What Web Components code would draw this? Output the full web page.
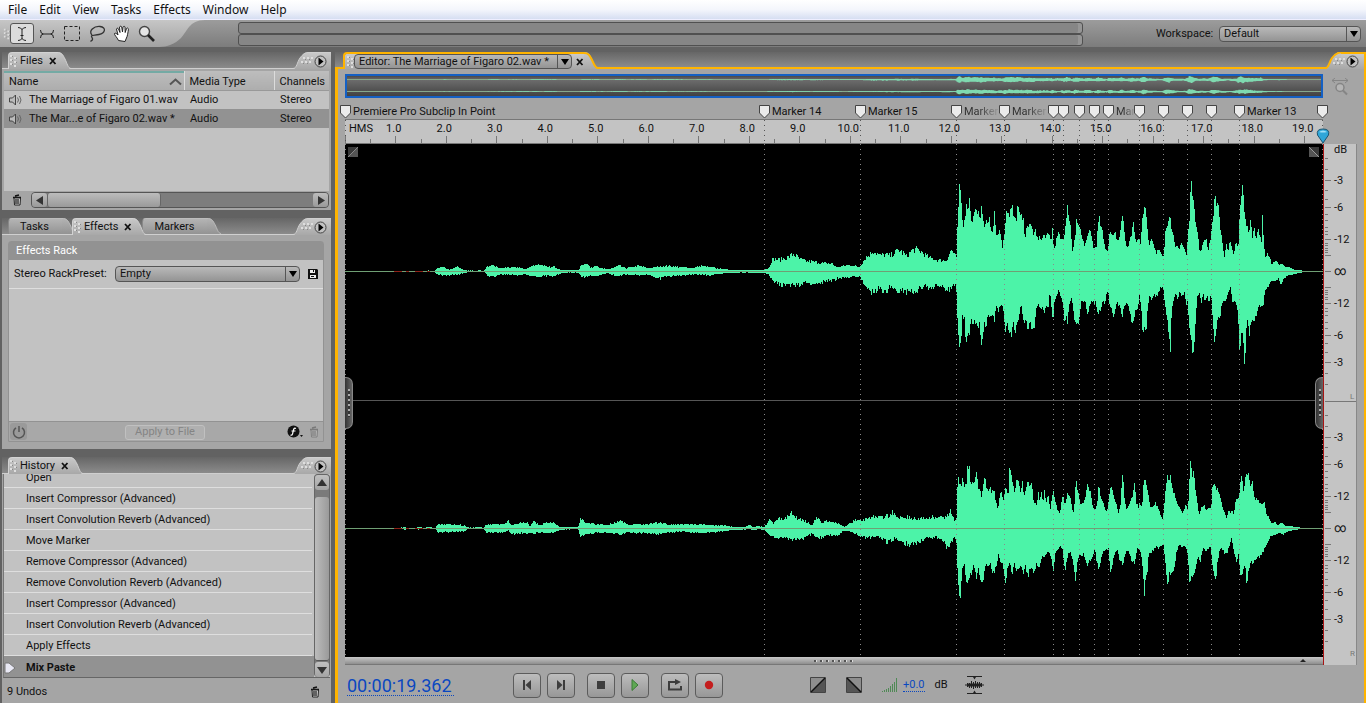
<!DOCTYPE html>
<html lang="en">
<head>
<meta charset="utf-8">
<title>Audio Editor</title>
<style>
html, body { height: 100%; }
body {
  margin: 0;
  font: 11px/14px Roboto, "Noto Sans", sans-serif;
  color: #111;
  background: #626262;
}
</style>
</head>
<body>
<audio-app></audio-app>

<script>
const define = (name, html, setup) => {
  const tpl = document.createElement('template');
  tpl.innerHTML = html;
  customElements.define(name, class extends HTMLElement {
    constructor() {
      super();
      this.attachShadow({ mode: 'open' }).append(tpl.content.cloneNode(true));
    }
    connectedCallback() {
      if (this.ready) return;
      this.ready = true;
      if (setup) setup(this, this.shadowRoot);
    }
  });
};

/* ---------- icons: [width, height, markup] ---------- */
const TRASH = `<path d="M1 3.500h8M3 2l4-1" stroke="#111" stroke-width="1.500"/><path d="M2 4h6.500l-.5 7H2.500z" fill="#ddd" stroke="#222"/><path d="M4 5v5M6 5v5" stroke="#111" stroke-width="1.200"/>`;
const ICONS = {
  ibeam: [16, 18, `<path d="M4 2.500q3 0 4 2 1-2 4-2M8 4v10M4 15.500q3 0 4-2 1 2 4 2M6.500 10.500h3" fill="none" stroke="#222"/>`],
  scrub: [16, 12, `<path d="M1.500 2q0 4 3 4h7q3 0 3-4M1.500 10q0-4 3-4M14.500 10q0-4-3-4" fill="none" stroke="#222"/>`],
  marquee: [16, 16, `<path d="M.5 .5h15v14H.5z" fill="none" stroke="#222" stroke-dasharray="3 2"/>`],
  lasso: [18, 18, `<path d="M4 10C0 6 6 1 12 1.500c7 .8 5 7-1 8-4 .8-7 .5-7.500 1.500-.3 1.500 1.500 2 1 3.500-.3 1-1.500 1.500-2 2" fill="none" stroke="#333" stroke-width="1.300"/>`],
  hand: [18, 18, `<path d="M5.500 15.500C4 12 1 10 1.500 8.500c1-1 2.500.5 3.500 1.500L3.500 4c.5-1.200 1.500-1 2 0L7 7.500 6.500 2c.8-1.200 1.800-1 2.200 0L9.500 7l.5-5c.6-1 1.800-.8 2 0l.2 5.500 1.300-4c.8-1 1.900-.3 1.900.7-.3 3-.8 5-1.200 7l-2.200 5.300z" fill="#fff" stroke="#222"/>`],
  zoom: [18, 18, `<circle cx="6.500" cy="6.500" r="5" fill="#e6e6e6" stroke="#444" stroke-width="1.400"/><path d="M10 10l6 6" stroke="#222" stroke-width="2.600"/>`],
  grip: [8, 12, `<g fill="#dedede"><path d="M1 0h2v2H1zM5 2h2v2H5zM1 4h2v2H1zM5 6h2v2H5zM1 8h2v2H1zM5 10h2v2H5z"/></g><g fill="#888"><path d="M3 1h1v1H3zM7 3h1v1H7zM3 5h1v1H3zM7 7h1v1H7zM3 9h1v1H3z"/></g>`],
  gripwide: [12, 8, `<g fill="#dedede"><path d="M2 0h2v2H2zM6 0h2v2H6zM10 0h2v2h-2zM0 4h2v2H0zM4 4h2v2H4zM8 4h2v2H8z"/></g><g fill="#888"><path d="M4 2h1v1H4zM8 2h1v1H8zM2 6h1v1H2zM6 6h1v1H6z"/></g>`],
  close: [8, 8, `<path d="M1 1l5.500 6M6.500 1L1 7" stroke="#111" stroke-width="1.800"/>`],
  play: [13, 13, `<circle cx="6.500" cy="6.500" r="5.500" fill="#c2c2c2" stroke="#444"/><path d="M4.500 2.500l5 4-5 4z" fill="#000"/>`],
  sort: [13, 8, `<path d="M1 6.500L6.500 1.500 12 6.500" fill="none" stroke="#555" stroke-width="2"/>`],
  speaker: [13, 12, `<path d="M.5 4h3L6.500 1v10L3.500 8H.5z" fill="#bbb" stroke="#444"/><path d="M8.500 3.500q2 2.500 0 5M10.500 2q3 4 0 8" fill="none" stroke="#666"/>`],
  trash: [11, 12, TRASH],
  trashdim: [11, 12, `<g opacity=".3">${TRASH}</g>`],
  left: [8, 9, `<path d="M7 0v9L0 4.500z" fill="#333"/>`],
  right: [8, 9, `<path d="M1 0v9l7-4.500z" fill="#333"/>`],
  up: [10, 8, `<path d="M0 7h10L5 0z" fill="#333"/>`],
  down: [10, 8, `<path d="M0 1h10L5 8z" fill="#333"/>`],
  save: [10, 10, `<path d="M0 0h9l1 1v9H0z" fill="#111"/><path d="M2 1h5v3H2zM2 6h6v3H2z" fill="#eee"/><path d="M5 1h1v2H5zM3 7h3v1H3z" fill="#111"/>`],
  power: [16, 16, `<path d="M5 3.800a5.500 5.500 0 1 0 6 0M8 2v6" fill="none" stroke="#555" stroke-width="1.500"/>`],
  fx: [17, 14, `<circle cx="6.500" cy="6.500" r="6" fill="#111"/><path d="M9 3.500q-2-1-2.500 1.500l-1 4q-.5 1.500-2 1M4.500 6h4" fill="none" stroke="#fff" stroke-width="1.200"/><path d="M13 10h3l-1.500 2z" fill="#111"/>`],
  pointer: [12, 12, `<path d="M1 1h4l6 5-6 5H1z" fill="#e8e8f4" stroke="#777"/>`],
  marker: [13, 15, `<path d="M1.500 1.500h10v7.500L6.500 14 1.500 9z" fill="#ebebeb" stroke="#444"/>`],
  pin: [14, 16, `<path d="M7 15L1.500 7Q0 1 7 1t5.500 6z" fill="#2fa6d8" stroke="#1c5570"/><path d="M3 4q4-3 8 0-4 1-8 0" fill="#9fe0f8"/>`],
  zoomsel: [18, 18, `<path d="M1 2.500h16M4 0L1 2.500 4 5M14 0l3 2.500L14 5" fill="none" stroke="#858585"/><circle cx="9" cy="9.500" r="4" fill="#b5b5b5" stroke="#858585" stroke-width="1.500"/><path d="M12 12.500l4 4" stroke="#858585" stroke-width="2"/>`],
  start: [10, 12, `<path d="M1 1h2v10H1zM9 1v10L3.500 6z" fill="#3d3d3d"/>`],
  end: [10, 12, `<path d="M7 1h2v10H7zM1 1v10l5.500-5z" fill="#3d3d3d"/>`],
  stop: [10, 10, `<path d="M1 1h8v8H1z" fill="#3d3d3d"/>`],
  playgreen: [8, 12, `<path d="M1 .5v11L7 6z" fill="#5fa854" stroke="#3c7a38"/>`],
  loop: [16, 12, `<path d="M8 3H2v7.500h12V7" fill="none" stroke="#3d3d3d" stroke-width="2"/><path d="M8 0l6 3-6 3z" fill="#3d3d3d"/>`],
  record: [10, 10, `<circle cx="5" cy="5" r="4.200" fill="#c41e1e"/>`],
  fadein: [17, 17, `<path d="M.5 .5h15v15H.5z" fill="#8e8e8e" stroke="#444"/><path d="M15 1v14H1z" fill="#555"/><path d="M1 15L15 1" stroke="#111" stroke-width="1.500"/>`],
  fadeout: [17, 17, `<path d="M.5 .5h15v15H.5z" fill="#8e8e8e" stroke="#444"/><path d="M1 1v14h14z" fill="#555"/><path d="M1 1l14 14" stroke="#111" stroke-width="1.500"/>`],
  bars: [16, 14, `<path d="M.5 14v-1M2.500 14v-2M4.500 14v-3M6.500 14v-4M8.500 14v-6M10.500 14v-8M12.500 14v-10M14.500 14V0" stroke="#4f8a55"/>`],
  scale: [20, 18, `<path d="M2 .5h15M2 17.500h15" stroke="#222"/><path d="M8 1h3L9.500 3.500zM8 17h3l-1.500-2.500z" fill="#222"/><path d="M0 9h19M2.500 7v4M4.500 7v5M6.500 5v7M8.500 6v7M10.500 5v7M12.500 6v6M14.500 6v6M16.500 7v4" stroke="#222"/><path d="M3 7.500h14v3H3z" fill="#222"/>`],
  cornerin: [10, 10, `<path d="M0 0h10v10H0z" fill="#555"/><path d="M0 0h10L0 10z" fill="#3a3a3a"/><path d="M0 10L10 0" stroke="#888"/>`],
  cornerout: [10, 10, `<path d="M0 0h10v10H0z" fill="#555"/><path d="M0 0h10v10z" fill="#3a3a3a"/><path d="M0 0l10 10" stroke="#999"/>`],
};
define('ui-icon', `<style>:host{display:inline-flex;flex:none}svg{display:block}</style>`, (el, root) => {
  const [w, h, art] = ICONS[el.getAttribute('name')];
  root.innerHTML += `<svg width="${w}" height="${h}" viewBox="0 0 ${w} ${h}" fill="none" aria-hidden="true">${art}</svg>`;
});

/* ---------- shared controls ---------- */
define('icon-button', `
<style>
:host { display: inline-flex; flex: none; }
button { all: unset; box-sizing: border-box; display: flex; align-items: center; justify-content: center; width: 100%; height: 100%; border-radius: inherit; }
</style>
<button type="button"><slot></slot></button>`, (el, root) => {
  root.querySelector('button').setAttribute('aria-label', el.getAttribute('label'));
});

define('skin-select', `
<style>
:host { display: flex; align-items: center; gap: 5px; white-space: nowrap; }
label { flex: none; min-width: var(--label-width, 0); }
label:empty { display: none; }
.box { display: grid; flex: 1; min-width: 0; height: var(--select-height, 16px); box-sizing: border-box; border: 1px solid #555; border-radius: 4px;
  background: linear-gradient(#b9b9b9, #949494); }
select { all: unset; grid-area: 1/1; padding: 0 16px 0 4px; font: inherit; color: inherit; line-height: 14px; min-width: 0; overflow: hidden; }
.arrow { grid-area: 1/1; justify-self: end; width: 13px; border-left: 1px solid #555; display: flex; align-items: center; justify-content: center; pointer-events: none; }
</style>
<label for="s"></label>
<div class="box"><select id="s"></select>
<span class="arrow"><svg width="8" height="6"><path d="M0 0h8L4 6z" fill="#000"/></svg></span></div>`, (el, root) => {
  const label = el.getAttribute('label');
  if (label) root.querySelector('label').textContent = label;
  else root.querySelector('select').setAttribute('aria-label', el.getAttribute('name'));
  root.querySelector('select').add(new Option(el.getAttribute('value')));
});

define('panel-tab', `
<style>
:host { display: flex; height: 16px; flex: none; margin-right: -4px; z-index: 1; --top: #b4b4b4; --bottom: #939393; --edge: #bcbcbc; }
:host([active]) { height: 17px; --top: #c9c9c9; --bottom: #a8a8a8; --edge: #d2d2d2; z-index: 2; }
:host([hot]) { --edge: #ffb400; }
.main { display: flex; align-items: center; gap: 3px; border: 1px solid var(--edge); border-right: 0; border-bottom: 0; border-radius: 4px 0 0 0; background: linear-gradient(var(--top), var(--bottom)); }
:host(:not([active])) .main { padding: 0 13px 0 11px; border-color: var(--edge) transparent transparent #888; }
:host([hot]) .main { border-width: 2px 0 0 2px; padding-left: 1px; }
.x { margin-left: 3px; width: 8px; height: 8px; }
:host(:not([active])) .only { display: none; }
.tail { display: block; width: 14px; height: 100%; flex: none; }
</style>
<div class="main"><ui-icon class="only" name="grip"></ui-icon><slot></slot><icon-button class="x only" label="Close"><ui-icon name="close"></ui-icon></icon-button></div>
<svg class="tail" viewBox="0 0 14 17" preserveAspectRatio="none">
<defs><linearGradient id="g" x2="0" y2="1"><stop stop-color="var(--top)"/><stop offset="1" stop-color="var(--bottom)"/></linearGradient></defs>
<path d="M0 0C5 0 6 3 8 7S11 17 14 17H0z" fill="url(#g)"/>
<path class="line" d="M0 .5C5 .5 6 3 8 7S11 16.500 14 16.500" fill="none" stroke="var(--edge)"/>
</svg>`, (el, root) => {
  if (el.hasAttribute('hot')) {
    const line = root.querySelector('.line');
    line.setAttribute('d', 'M0 1C5 1 6 4 8 8S11 16 14 16');
    line.setAttribute('stroke-width', '2');
  }
});

define('dock-panel', `
<style>
:host { display: flex; flex-direction: column; min-height: 0; min-width: 0; --line: #cfcfcf; --line-size: 1px; }
:host([hot]) { --line: #ffb400; --line-size: 2px; }
header { display: flex; justify-content: space-between; height: 17px; flex: none; margin-bottom: calc(0px - var(--line-size)); padding-left: 6px; position: relative; z-index: 1;
  background: linear-gradient(#666, #8b8b8b) 0 0 / 100% calc(100% - var(--line-size)) no-repeat; }
.tabs { display: flex; }
.corner { display: flex; flex: none; }
.curve { width: 16px; height: 17px; display: block; flex: none; }
.menu { display: flex; align-items: center; gap: 1px; padding-right: 4px; background: linear-gradient(#c9c9c9, #a8a8a8); border-top: var(--line-size) solid var(--line); box-sizing: border-box; }
.menu > ui-icon { margin-left: -8px; }
.body { display: flex; flex-direction: column; flex: 1; min-height: 0; background: #a5a5a5; border-top: var(--line-size) solid var(--line); box-sizing: border-box; }
:host([hot]) header { padding-left: 8px; }
:host([hot]) .body { border: solid #ffb400; border-width: 2px 2px 0 3px; }
:host([hot]) .menu { border-right: 2px solid #ffb400; padding-right: 5px; }
</style>
<header><div class="tabs"><slot name="tab"></slot></div>
<div class="corner"><svg class="curve" viewBox="0 0 16 17"><defs><linearGradient id="g" x2="0" y2="1"><stop stop-color="#c9c9c9"/><stop offset="1" stop-color="#a8a8a8"/></linearGradient></defs><path d="M0 17C4 17 4 10 7 6S12 0 16 0V17z" fill="url(#g)"/><path d="M0 16.500C4 16.500 4 10 7 6S12 .5 16 .5" fill="none" stroke="var(--line)" stroke-width="var(--line-size)"/></svg>
<div class="menu"><ui-icon name="gripwide"></ui-icon><icon-button label="Panel menu"><ui-icon name="play"></ui-icon></icon-button></div></div></header>
<div class="body"><slot></slot></div>`);

/* ---------- top bars ---------- */
define('menu-bar', `
<style>
:host { display: block; background: linear-gradient(#fff, #f4f6fc 50%, #d6def2); border-bottom: 1px solid #eef; }
nav { display: flex; gap: 12px; padding: 2px 8px 1px; font: 12px/16px "Noto Sans", sans-serif; }
button { all: unset; }
</style>
<nav></nav>`, (el, root) => {
  root.querySelector('nav').innerHTML = ['File', 'Edit', 'View', 'Tasks', 'Effects', 'Window', 'Help']
    .map(t => `<button type="button">${t}</button>`).join('');
});

define('tool-bar', `
<style>
:host { display: flex; align-items: stretch; height: 27px; background: linear-gradient(#9c9c9c, #7c7c7c); }
.tools { display: flex; align-items: center; padding-left: 3px; background: linear-gradient(#c6c6c6, #a2a2a2); }
.tools icon-button { width: 25px; height: 21px; }
.tools .grip { width: 7px; overflow: hidden; }
.tools .on { box-sizing: border-box; width: 24px; border: 1px solid #555; border-radius: 3px; background: #dcdcdc; }
.sweep { width: 46px; height: 27px; flex: none; display: block; }
.meters { flex: 1; display: flex; flex-direction: column; justify-content: center; margin: 1px 73px 1px 33px; }
.meters i { display: block; box-sizing: border-box; height: 12px; border: 1px solid #505050; border-radius: 3px; background: #868686; box-shadow: inset -4px 0 #969696; }
skin-select { width: 205px; margin-right: 5px; --label-width: 58px; }
</style>
<div class="tools"><ui-icon class="grip" name="grip"></ui-icon>
<icon-button class="on" label="Time selection"><ui-icon name="ibeam"></ui-icon></icon-button>
<icon-button label="Scrub"><ui-icon name="scrub"></ui-icon></icon-button>
<icon-button label="Marquee"><ui-icon name="marquee"></ui-icon></icon-button>
<icon-button label="Lasso"><ui-icon name="lasso"></ui-icon></icon-button>
<icon-button label="Hand"><ui-icon name="hand"></ui-icon></icon-button>
<icon-button label="Zoom"><ui-icon name="zoom"></ui-icon></icon-button></div>
<svg class="sweep" viewBox="0 0 46 27"><defs><linearGradient id="g" x2="0" y2="1"><stop stop-color="#c6c6c6"/><stop offset="1" stop-color="#a2a2a2"/></linearGradient></defs><path d="M0 0H46C30 0 28 12 22 18S8 27 0 27z" fill="url(#g)"/></svg>
<div class="meters"><i></i><i></i></div>
<skin-select label="Workspace:" value="Default"></skin-select>`);

/* ---------- left panels ---------- */
define('file-list', `
<style>
:host { display: flex; flex-direction: column; margin: 2px 2px 0; }
.list { height: 120px; background: #c2c2c2; }
table { width: 100%; border-collapse: collapse; table-layout: fixed; }
th { height: 19px; box-sizing: border-box; padding: 3px 0 0 5px; font-weight: normal; text-align: left; background: linear-gradient(#bdbdbd, #adadad); border-left: 1px solid #dcdcdc; border-bottom: 1px solid #999; }
th:first-child { border-left: 0; box-shadow: inset 0 2px #74aaa4; }
.head { display: flex; align-items: center; justify-content: space-between; padding-right: 2px; }
td { padding: 0 0 0 6px; height: 19px; box-sizing: border-box; white-space: nowrap; overflow: hidden; }
td:first-child { padding-left: 5px; }
.name { display: flex; align-items: center; gap: 7px; }
tr.sel { background: #929292; }
.foot { display: flex; align-items: center; height: 18px; }
.foot > icon-button { width: 27px; }
.scroll { flex: 1; display: flex; background: #7d7d7d; height: 16px; border: 1px solid #555; border-radius: 4px; box-sizing: border-box; }
.scroll icon-button, .thumb { background: linear-gradient(#bcbcbc, #999); border-radius: 3px; box-sizing: border-box; }
.scroll icon-button { width: 15px; }
.thumb { width: 114px; border: 1px solid #666; border-width: 0 1px; }
.gap { flex: 1; }
</style>
<div class="list"><table>
<colgroup><col style="width:180px"><col style="width:90px"><col></colgroup>
<thead><tr><th><span class="head">Name <ui-icon name="sort"></ui-icon></span></th><th>Media Type</th><th>Channels</th></tr></thead>
<tbody><tr><td><span class="name"><ui-icon name="speaker"></ui-icon>The Marriage of Figaro 01.wav</span></td><td>Audio</td><td>Stereo</td></tr>
<tr class="sel"><td><span class="name"><ui-icon name="speaker"></ui-icon>The Mar...e of Figaro 02.wav *</span></td><td>Audio</td><td>Stereo</td></tr></tbody>
</table></div>
<div class="foot"><icon-button label="Delete file"><ui-icon name="trash"></ui-icon></icon-button>
<div class="scroll"><icon-button label="Scroll left"><ui-icon name="left"></ui-icon></icon-button><span class="thumb"></span><span class="gap"></span><icon-button label="Scroll right"><ui-icon name="right"></ui-icon></icon-button></div></div>`);

define('effects-rack', `
<style>
:host { display: flex; flex-direction: column; flex: 1; margin: 6px 7px 7px 6px; border: 1px solid #929292; border-radius: 3px 3px 0 0; background: #c2c2c2; }
h2 { margin: 0; padding: 0 7px; font: inherit; line-height: 18px; color: #fff; background: #929292; }
.preset { display: flex; align-items: center; gap: 3px; padding: 6px 0 6px 5px; border-bottom: 1px solid #dedede; }
skin-select { flex: 1; --label-width: 96px; }
.preset icon-button { width: 20px; }
.space { flex: 1; }
.foot { display: grid; grid-template-columns: 1fr auto 1fr; align-items: center; height: 19px; padding: 0 3px 0 1px; background: #a8a8a8; border-top: 1px solid #929292; }
.power { width: 17px; height: 17px; background: #9a9a9a; border-radius: 3px; }
.apply { font: inherit; line-height: 12px; padding: 0; width: 80px; height: 15px; color: #848484; background: #b0b0b0; border: 1px solid #c0c0c0; border-radius: 3px; margin-top: 1px; }
.end { display: flex; justify-content: flex-end; gap: 5px; }
</style>
<h2>Effects Rack</h2>
<div class="preset"><skin-select label="Stereo RackPreset:" value="Empty"></skin-select><icon-button label="Save preset"><ui-icon name="save"></ui-icon></icon-button></div>
<div class="space"></div>
<div class="foot"><icon-button class="power" label="Power"><ui-icon name="power"></ui-icon></icon-button>
<button class="apply" type="button" disabled>Apply to File</button>
<span class="end"><icon-button label="Add effect"><ui-icon name="fx"></ui-icon></icon-button><icon-button label="Remove"><ui-icon name="trashdim"></ui-icon></icon-button></span></div>`);

define('history-list', `
<style>
:host { display: flex; flex-direction: column; flex: 1; min-height: 0; }
.view { display: flex; flex: 1; min-height: 0; margin: 0 1px; background: #c2c2c2; border-bottom: 1px solid #666; border-left: 1px solid #777; }
ul { flex: 1; display: flex; flex-direction: column; justify-content: flex-end; margin: 0; padding: 0; list-style: none; overflow: hidden; }
li { flex: none; display: flex; align-items: center; height: 21px; padding-top: 2px; box-sizing: border-box; border-bottom: 1px solid #dedede; margin-right: 2px; }
li::before { content: ""; width: 22px; }
li.now { font-weight: bold; background: #929292; border: 0; margin: 0; }
li.now::before { display: none; }
li ui-icon { width: 22px; }
.scroll { width: 16px; flex: none; display: flex; flex-direction: column; background: #7a7a7a; border: 1px solid #666; border-bottom: 0; box-sizing: border-box; border-radius: 4px; }
.scroll icon-button { height: 15px; background: linear-gradient(#c0c0c0, #a4a4a4); border-radius: 3px; }
.thumb { flex: 1; margin: 7px 0 1px; background: linear-gradient(90deg, #bcbcbc, #9a9a9a); border-radius: 3px; border-bottom: 1px solid #555; }
.foot { display: flex; align-items: center; justify-content: space-between; height: 25px; padding: 3px 10px 0 5px; box-sizing: border-box; }
</style>
<div class="view"><ul></ul>
<div class="scroll"><icon-button label="Scroll up"><ui-icon name="up"></ui-icon></icon-button><span class="thumb"></span><icon-button label="Scroll down"><ui-icon name="down"></ui-icon></icon-button></div></div>
<div class="foot"><span>9 Undos</span><icon-button label="Clear history"><ui-icon name="trash"></ui-icon></icon-button></div>`, (el, root) => {
  root.querySelector('ul').innerHTML = ['Open', 'Insert Compressor (Advanced)', 'Insert Convolution Reverb (Advanced)', 'Move Marker',
    'Remove Compressor (Advanced)', 'Remove Convolution Reverb (Advanced)', 'Insert Compressor (Advanced)',
    'Insert Convolution Reverb (Advanced)', 'Apply Effects'].map(t => `<li>${t}</li>`).join('') +
    '<li class="now"><ui-icon name="pointer"></ui-icon>Mix Paste</li>';
});

/* ---------- waveform data ----------
   Envelopes are "position:level" lists on a grid of 2934 x 1539 units.
   The quiet passage lists position:above,below; the loud passage has one list per side. */
const QUIET = [
 '0:0,0 140:1,1 180:0,0 200:1,2 210:2,1 225:1,1 232:8,8 250:10,10 262:5,10 285:12,8 298:4,5 310:2,2 335:2,2 352:2,2 358:12,10 376:14,15 390:8,8 410:10,8 440:10,10 455:5,8 480:16,14 490:18,16 500:15,10 512:10,12 528:12,12 545:4,6 560:3,3 590:3,3 596:16,14 611:21,14 620:8,10 634:16,14 645:8,8 665:5,6 692:14,12 710:8,8 745:14,10 765:8,8 795:12,18 820:14,12 850:10,10 880:8,8 900:14,8 925:10,10 950:6,6 975:4,4 1000:3,3 1060:4,4 1070:8,8 1080:30,22 1100:30,35 1120:35,33 1133:44,36 1150:30,35 1170:25,28 1190:24,35 1200:22,32 1215:20,22 1230:20,25 1245:10,18 1270:16,15 1300:12,12 1306:20,20 1318:36,45 1337:52,55 1350:40,40 1366:42,55 1380:40,35 1400:55,50 1420:38,50 1430:50,45 1440:56,55 1455:50,40 1475:35,40 1500:28,35 1520:28,45 1533:55,45 1544:40,30',
 '0:0,0 120:0,0 150:3,3 170:0,0 185:3,3 200:1,1 210:3,2 228:1,1 232:10,10 300:8,8 310:2,2 350:2,2 356:10,10 400:10,10 413:20,5 420:8,15 445:14,12 460:16,12 466:4,10 476:18,14 490:8,10 505:14,12 525:14,10 545:2,4 560:4,3 588:2,2 595:26,20 605:14,14 640:10,12 660:8,10 697:20,15 715:10,10 750:10,12 795:14,14 820:10,10 850:10,8 900:10,12 930:8,10 960:8,8 980:4,4 1010:3,3 1022:8,2 1035:3,5 1045:6,2 1060:4,4 1074:22,20 1083:10,22 1096:28,25 1110:22,22 1130:40,28 1145:25,25 1160:20,25 1180:8,15 1192:28,20 1205:15,25 1220:18,15 1240:14,20 1262:4,6 1290:22,12 1306:18,22 1320:25,25 1345:30,20 1372:30,35 1383:42,30 1395:25,25 1410:30,38 1440:25,42 1475:28,22 1500:30,25 1520:28,45 1530:45,40 1540:20,20 1544:20,30'];
const LOUD = [[334,
 '49:296 51:200 55:130 58:66 61:108 64:138 67:205 72:175 78:140 84:137 88:114 92:180 98:180 103:145 108:155 112:152 116:165 118:195 121:172 124:138 128:170 134:205 138:180 143:190 147:178 152:220 158:205 162:155 166:215 172:225 178:213 182:235 186:262 192:230 196:180 199:145 203:160 206:180 209:132 212:165 215:118 218:165 222:180 226:172 229:190 232:118 236:145 241:160 245:175 250:185 253:242 258:205 265:190 272:200 275:195 280:225 285:205 290:235 297:232 303:245 308:228 315:232 325:212 332:240 336:205 340:262 344:262 348:235 354:212 360:240 367:240 371:230 377:185 381:137 386:180 391:205 395:275 400:255 405:228 409:170 412:190 415:210 419:205 425:235 432:255 438:240 448:210 454:225 460:275 464:255 468:262 472:205 475:162 480:200 485:205 490:250 497:270 503:275 507:215 513:215 518:225 524:210 530:240 536:240 541:210 544:157 549:185 553:230 558:255 562:262 567:240 573:225 579:193 583:225 589:250 595:230 601:255 605:175 609:150 613:127 617:165 621:200 625:260 631:235 636:245 642:265 648:280 652:265 658:270 665:285 670:285 674:240 676:197 682:200 688:157 692:205 698:225 704:260 710:255 716:265 722:250 730:265 738:285 743:210 747:190 750:100 753:70 756:118 759:118 763:165 767:200 772:210 776:265 782:275 788:245 797:232 803:270 810:240 815:200 820:165 823:104 828:135 832:140 835:127 838:190 843:218 847:255 852:290 858:250 863:270 868:245 874:265 880:290 886:245 890:255 894:250 898:150 902:120 906:78 909:110 912:155 916:190 922:205 926:210 931:175 935:240 941:190 947:240 953:206 960:235 963:240 966:172 970:250 975:290 981:280 988:290 994:315 1002:305 1008:302 1016:315 1024:312 1034:320 1045:322 1060:328 1080:331 1105:333 1149:334',
 '47:375 52:495 58:572 62:540 66:460 72:480 76:560 80:530 88:525 92:480 100:490 105:485 112:500 118:490 124:570 127:520 132:485 137:500 142:455 148:480 155:460 162:485 167:430 173:450 179:445 185:435 190:450 195:525 200:490 207:520 214:520 219:490 222:520 228:500 235:475 241:430 245:450 250:485 256:475 262:515 268:485 275:505 282:508 287:450 294:430 300:450 306:440 312:465 318:435 324:440 328:390 333:440 337:488 342:430 348:410 355:390 362:410 368:435 372:490 377:465 382:490 386:435 392:415 398:440 403:492 412:485 417:480 421:430 430:425 436:430 442:468 448:430 454:425 460:430 466:425 472:460 477:445 482:450 487:415 493:430 498:400 504:400 508:445 515:455 521:475 527:430 533:430 540:445 545:478 550:440 556:435 562:430 568:450 575:500 580:480 586:440 592:455 597:400 602:440 607:515 618:510 622:440 627:408 633:415 640:405 648:410 655:395 661:382 668:385 673:425 678:470 683:500 690:572 694:450 700:425 706:400 712:420 718:395 724:412 732:400 738:430 742:425 746:500 752:545 758:598 763:530 767:470 770:405 777:400 783:425 788:395 794:425 800:405 806:435 812:400 817:490 823:552 827:510 833:470 839:470 845:430 850:420 856:425 862:400 870:380 877:430 884:420 890:435 895:500 898:585 903:525 907:530 913:615 917:520 920:475 927:525 931:480 940:490 946:465 953:450 960:435 968:440 973:395 980:385 988:370 994:360 1004:365 1015:355 1021:375 1030:355 1042:347 1060:342 1080:338 1105:335 1149:334'],
 [295,
 '48:265 52:145 58:155 63:170 67:145 72:175 78:155 82:102 85:120 88:115 91:170 96:155 104:155 109:117 113:175 119:180 124:205 128:175 133:140 137:170 143:185 148:170 153:190 160:175 166:215 172:240 177:200 182:185 188:215 195:175 200:180 204:190 208:100 212:130 216:150 222:185 228:150 234:150 240:180 246:160 252:200 258:165 262:150 268:165 274:165 280:220 288:222 294:190 298:215 302:180 308:220 312:185 318:215 323:195 330:240 336:190 340:185 345:220 352:240 358:250 364:210 368:200 374:225 381:190 390:205 398:250 403:220 406:140 410:165 418:215 425:225 430:220 436:200 442:160 450:185 457:230 463:240 470:225 475:160 480:195 488:220 495:240 500:240 505:215 511:158 515:180 520:205 526:215 534:250 540:220 547:125 551:200 558:235 565:230 571:210 577:195 583:157 587:220 594:230 598:220 605:230 609:170 613:138 618:170 624:195 630:230 638:235 645:220 652:230 660:255 667:270 672:220 676:180 680:135 685:150 689:133 694:170 700:190 706:205 712:220 719:235 727:250 735:225 742:240 746:180 750:80 754:135 760:130 765:180 770:215 776:255 783:235 790:225 798:240 808:230 813:230 817:152 823:165 828:180 833:180 838:200 845:225 851:245 858:265 865:240 870:250 875:240 880:255 886:205 893:205 898:180 902:135 906:150 910:190 914:150 918:135 925:127 930:165 936:160 942:205 950:210 960:215 968:225 973:210 976:250 985:262 992:278 1005:278 1012:285 1025:278 1035:287 1050:288 1065:291 1090:294 1149:295',
 '48:340 52:430 58:510 62:475 66:420 72:400 76:440 82:470 86:440 94:435 100:405 107:445 113:410 119:440 127:460 132:430 136:395 142:410 150:400 155:430 163:425 168:405 174:370 180:400 186:405 191:430 196:475 201:420 208:400 215:430 222:400 228:430 236:410 242:405 248:430 256:410 263:440 270:410 277:425 283:425 288:400 294:410 300:400 306:380 312:385 320:370 328:365 333:390 340:428 345:365 352:360 360:350 367:360 373:425 380:385 386:365 392:370 400:410 406:455 411:395 417:370 424:385 430:370 436:395 443:410 448:390 455:385 463:350 469:395 475:420 480:400 487:365 495:360 504:355 511:435 516:400 523:370 530:360 537:385 547:405 553:375 562:360 570:380 577:400 584:395 590:355 600:365 605:400 613:500 616:430 620:435 625:370 635:365 645:350 655:355 665:345 670:345 675:400 682:482 686:430 695:435 702:415 708:370 716:345 725:350 735:350 742:370 747:460 754:440 765:420 772:380 780:390 788:350 795:365 803:355 810:350 817:410 826:458 830:405 836:370 842:350 850:365 858:375 866:350 873:325 880:360 888:395 894:370 901:448 908:415 913:400 919:465 924:420 930:400 940:395 950:385 960:380 970:360 980:340 990:320 1005:315 1015:308 1028:314 1040:305 1060:300 1090:296 1149:295']];

function envelope(channel, side) {
  const quiet = QUIET[channel].split(' ').map(p => {
    const [x, v] = p.split(':');
    return [x * 1.186, v.split(',')[side] * 1.186];
  });
  const [zero, ...sides] = LOUD[channel];
  const loud = sides[side].split(' ').map(p => {
    const [x, v] = p.split(':').map(Number);
    return [x + 1785, Math.abs(v - zero)];
  });
  const pts = quiet.concat(loud), out = [];
  let i = 0, seed = 7 + channel * 31 + side * 57;
  for (let x = 0; x < 2934; x += 3) {
    while (i < pts.length - 2 && pts[i + 1][0] <= x) i++;
    const [x0, a] = pts[i], [x1, b] = pts[i + 1];
    const t = Math.min(1, Math.max(0, (x - x0) / (x1 - x0 || 1)));
    seed = (seed * 16807) % 2147483647;
    const jitter = 1 + (seed / 2147483647 - .5) * (x < 1830 ? .36 : .12);
    out.push((a + (b - a) * t) * jitter);
  }
  return out;
}
const ENVELOPES = [0, 1].map(c => [envelope(c, 0), envelope(c, 1)]);

function wavePath(channel, zero, gain) {
  const [up, down] = ENVELOPES[channel];
  let d = `M0 ${zero}`;
  up.forEach((v, i) => d += `V${Math.round(zero - v * gain)}H${i * 3 + 3}`);
  for (let i = down.length - 1; i >= 0; i--) d += `V${Math.round(zero + down[i] * gain)}H${i * 3}`;
  return d + 'z';
}

const MARKERS = [0, 419, 515, 611, 659, 708, 718, 734, 749, 763, 794, 818, 842, 866, 894, 977];
const MARKER_TEXT = { 0: 'Premiere Pro Subclip In Point', 1: 'Marker 14', 2: 'Marker 15', 3: 'Marker', 4: 'Marker', 9: 'Marker', 14: 'Marker 13' };
const SPAN = 978;
const markerLines = MARKERS.map(m => `<line x1="${m / SPAN * 100}%" x2="${m / SPAN * 100}%" y2="100%"/>`).join('');

define('wave-overview', `
<style>
:host { display: block; height: 20px; border: 2px solid #1460c4; background: linear-gradient(#4a4a4a, #6c6c6c 20%, #424242); }
svg { display: block; width: 100%; height: 100%; }
</style>
<svg viewBox="0 0 2934 60" preserveAspectRatio="none"></svg>`, (el, root) => {
  root.querySelector('svg').innerHTML = `<path d="M0 9h2934v3H0zM0 45h2934v3H0z" fill="#86a88c"/>
    <path d="${wavePath(0, 11, .04)}${wavePath(1, 47, .04)}" fill="#7fdab0"/>`;
});

define('marker-track', `
<style>
:host { display: grid; height: 15px; grid-template-columns: ${MARKERS.slice(1).map((m, i) => `minmax(0, ${m - MARKERS[i]}fr)`).join(' ')} 1px; }
.cell { display: flex; min-width: 0; }
.cell ui-icon { margin: 0 1px 0 -6px; }
.text { flex: 1; min-width: 0; overflow: hidden; white-space: nowrap; line-height: 15px; }
.cut { margin-right: 4px; color: #333; -webkit-mask-image: linear-gradient(90deg, #000 40%, transparent); mask-image: linear-gradient(90deg, #000 40%, transparent); }
</style>`, (el, root) => {
  MARKERS.forEach((m, i) => {
    const text = MARKER_TEXT[i] || '';
    root.innerHTML += `<div class="cell"><ui-icon name="marker"></ui-icon>${text ? `<span class="text${text === 'Marker' ? ' cut' : ''}">${text}</span>` : ''}</div>`;
  });
});

define('time-ruler', `
<style>
:host { display: grid; height: 24px; background: #c3c3c3; border-top: 1px solid #777; border-bottom: 1px solid #777; box-sizing: border-box; }
svg, .labels { grid-area: 1/1; width: 100%; height: 100%; display: block; }
.labels { display: flex; overflow: hidden; line-height: 17px; }
.labels span { flex: 0 0 5.165%; text-align: center; }
.labels .unit { flex: 0 0 2.400%; min-width: 0; text-indent: 4px; text-align: left; }
line { stroke: #777; shape-rendering: crispEdges; }
.marks line { stroke: #555; stroke-dasharray: 1 4; }
</style>
<svg><g class="ticks"></g><g class="marks">${markerLines}</g></svg><div class="labels"><span class="unit">HMS</span></div>`, (el, root) => {
  let ticks = '';
  for (let h = 0; h < 39; h++) {
    const x = (h * 25.240 + 0.5) / SPAN * 100;
    ticks += `<line x1="${x}%" x2="${x}%" y1="${h % 2 ? 19 : 16}" y2="24"/>`;
  }
  root.querySelector('.ticks').innerHTML = ticks;
  for (let s = 1; s < 20; s++) root.querySelector('.labels').innerHTML += `<span>${s}.0</span>`;
});

define('wave-view', `
<style>
:host { display: grid; min-height: 0; background: #000; position: relative; overflow: hidden; }
svg { grid-area: 1/1; display: block; width: 100%; height: 100%; min-height: 0; }
.lines line { stroke: #8a8a8a; stroke-dasharray: 1 4; shape-rendering: crispEdges; }
.guides line { stroke: #6f9f74; shape-rendering: crispEdges; }
.guides .split { stroke: #565656; }
.guides .clip { stroke: #8d1f16; stroke-dasharray: 8 4 3 6; }
.badge { position: absolute; top: 3px; left: 3px; }
.badge.r { left: auto; right: 4px; }
.handle { position: absolute; top: 45.500%; left: 0; width: 7px; height: 50px; border: 1px solid #888; border-left: 0; border-radius: 0 7px 7px 0; background: linear-gradient(90deg, #333, #666); display: flex; align-items: center; justify-content: center; }
.handle.r { left: auto; right: 0; border: 1px solid #888; border-right: 0; border-radius: 7px 0 0 7px; }
.handle::before { content: ""; width: 2px; height: 28px; background: repeating-linear-gradient(#aaa 0 2px, #333 2px 5px); }
</style>
<svg class="wave" viewBox="0 0 2934 1539" preserveAspectRatio="none" shape-rendering="crispEdges"></svg>
<svg class="guides"><line x2="100%" y1="24.850%" y2="24.850%"/><line x2="100%" y1="74.950%" y2="74.950%"/><line class="split" x2="100%" y1="50%" y2="50%"/>
<line class="clip" x1="5%" x2="9%" y1="24.850%" y2="24.850%"/><line class="clip" x1="5%" x2="9%" y1="74.950%" y2="74.950%"/></svg>
<svg class="lines">${markerLines}</svg>
<ui-icon class="badge" name="cornerin"></ui-icon><ui-icon class="badge r" name="cornerout"></ui-icon>
<i class="handle"></i><i class="handle r"></i>`, (el, root) => {
  root.querySelector('.wave').innerHTML = `<path d="${wavePath(0, 382, 1)}${wavePath(1, 1153, 1)}" fill="#4cf3a8"/>`;
});

define('db-scale', `
<style>
:host { display: block; min-height: 0; position: relative; background: #c4c4c4; border-left: 1px solid #a81414; border-right: 1px solid #888; box-sizing: border-box; }
svg { position: absolute; inset: 0; width: 100%; height: 100%; }
line { stroke: #777; shape-rendering: crispEdges; }
text { font: inherit; fill: #111; }
.side { font-size: 8px; fill: #777; }
.inf { font-size: 12px; }
ui-icon { position: absolute; top: -16px; left: -8px; }
</style>
<svg></svg><ui-icon name="pin"></ui-icon>`, (el, root) => {
  const at = y => `${y / 521 * 100}%`;
  const tick = (y, w) => `<line x1="1" x2="${w}" y1="${at(y)}" y2="${at(y)}"/>`;
  const text = (y, x, t, c = '') => `<text x="${x}" y="${at(y)}" dy="4" class="${c}">${t}</text>`;
  let out = text(5, 10, 'dB') + tick(257, 33) + text(251, 26, 'L', 'side') + text(508, 26, 'R', 'side');
  for (const mid of [127, 384]) {
    out += tick(mid, 7) + text(mid, 10, '∞', 'inf');
    for (const s of [-1, 1]) {
      for (const o of [91, 64, 32, 16]) out += tick(mid + s * o, 7);
      for (const o of [113, 102, 81, 72, 57, 51, 44, 40, 37, 28, 26, 23, 21, 19]) out += tick(mid + s * o, 4);
      out += text(mid + s * 91, 10, '-3') + text(mid + s * 64, 10, '-6') + text(mid + s * 32, 10, '-12');
    }
  }
  root.querySelector('svg').innerHTML = out;
});

define('transport-bar', `
<style>
:host { display: flex; align-items: center; height: 38px; padding-top: 2px; box-sizing: border-box; }
a { color: #0b48c0; text-decoration: none; border-bottom: 1px dotted #0b48c0; }
.time { font-size: 18px; line-height: 18px; margin: 2px 0 0 2px; flex: 0 0 107px; }
.keys { display: flex; gap: 12px; margin-left: 59px; }
.pair { display: flex; gap: 6px; }
.pair icon-button { width: 26px; height: 23px; border: 1px solid #5c5c5c; border-radius: 4px; background: linear-gradient(#bdbdbd, #979797); }
.tools { display: flex; align-items: center; margin-left: 87px; }
.fades { display: flex; gap: 19px; margin-right: 19px; }
.gain { line-height: 12px; margin: 0 10px 0 5px; }
.unit { margin-right: 17px; }
</style>
<a class="time" href="#time">00:00:19.362</a>
<div class="keys">
<span class="pair"><icon-button label="Go to start"><ui-icon name="start"></ui-icon></icon-button><icon-button label="Go to end"><ui-icon name="end"></ui-icon></icon-button></span>
<span class="pair"><icon-button label="Stop"><ui-icon name="stop"></ui-icon></icon-button><icon-button label="Play"><ui-icon name="playgreen"></ui-icon></icon-button></span>
<span class="pair"><icon-button label="Loop"><ui-icon name="loop"></ui-icon></icon-button><icon-button label="Record"><ui-icon name="record"></ui-icon></icon-button></span></div>
<div class="tools"><span class="fades"><icon-button label="Fade in"><ui-icon name="fadein"></ui-icon></icon-button><icon-button label="Fade out"><ui-icon name="fadeout"></ui-icon></icon-button></span>
<ui-icon name="bars"></ui-icon><a class="gain" href="#gain">+0.0</a><span class="unit">dB</span><icon-button label="Scale"><ui-icon name="scale"></ui-icon></icon-button></div>`);

define('wave-editor', `
<style>
:host { flex: 1; min-height: 0; display: grid; grid-template: 24px 21px 25px minmax(200px, 1fr) 8px 38px / minmax(0, 1fr) 34px; padding: 5px 7px 0; }
.zoom { justify-self: center; margin-top: 2px; }
marker-track { align-self: end; }
time-ruler { height: 25px; }
db-scale { grid-area: 4 / 2 / 6 / 3; }
.bar { grid-area: 5 / 1; background: linear-gradient(#c8c8c8, #8e8e8e); border-bottom: 1px solid #777; box-sizing: border-box; display: grid; grid-template-columns: 1fr 40px 1fr; align-items: center; }
.bar i { height: 2px; background: repeating-linear-gradient(90deg, #555 0 2px, #ddd 2px 3px, transparent 3px 6px); }
.bar svg { justify-self: end; margin-right: 17px; }
transport-bar { grid-column: 1 / 3; }
marker-track, time-ruler, wave-view { grid-column: 1; }
</style>
<wave-overview></wave-overview><icon-button class="zoom" label="Zoom to selection"><ui-icon name="zoomsel"></ui-icon></icon-button>
<marker-track></marker-track>
<time-ruler></time-ruler>
<wave-view></wave-view>
<db-scale></db-scale>
<div class="bar"><span></span><i></i><svg width="6" height="3"><path d="M0 3h6L3 0z" fill="#222"/></svg></div>
<transport-bar></transport-bar>`);

define('audio-app', `
<style>
:host { display: flex; flex-direction: column; height: 100vh; min-height: 560px; background: #626262; }
menu-bar, tool-bar { flex: none; }
main { flex: 1; min-height: 0; display: grid; grid-template: minmax(0, 1fr) / 329px minmax(0, 1fr); gap: 4px; padding: 5px 0 0 2px; }
.left { display: grid; grid-template-rows: 158px 231px minmax(0, 1fr); gap: 8px; min-height: 0; }
.pick { width: 218px; margin: 0 -2px 0 -3px; --select-height: 15px; }
</style>
<menu-bar></menu-bar>
<tool-bar></tool-bar>
<main>
<div class="left">
<dock-panel><panel-tab slot="tab" active>Files</panel-tab><file-list></file-list></dock-panel>
<dock-panel><panel-tab slot="tab">Tasks</panel-tab><panel-tab slot="tab" active>Effects</panel-tab><panel-tab slot="tab">Markers</panel-tab><effects-rack></effects-rack></dock-panel>
<dock-panel><panel-tab slot="tab" active>History</panel-tab><history-list></history-list></dock-panel>
</div>
<dock-panel hot><panel-tab slot="tab" active hot><skin-select class="pick" name="Open file" value="Editor: The Marriage of Figaro 02.wav *"></skin-select></panel-tab><wave-editor></wave-editor></dock-panel>
</main>`);
</script>
</body>
</html>
